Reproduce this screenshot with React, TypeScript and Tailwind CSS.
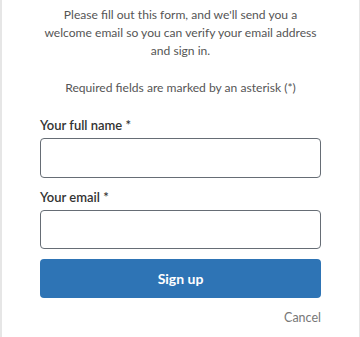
export default function App() {
  return (
    <div
      className="h-[337px] w-[360px] overflow-hidden border-l-2 border-r border-l-[#e6e6e6] border-r-[#e6e6e6] bg-white text-[12px] leading-[18px] text-[#555]"
      style={{ fontFamily: '"Segoe UI", Lato, "Open Sans", sans-serif' }}
    >
      <div className="px-[38px] pt-[6px]">
        <p className="text-center text-[12.1px]">
          Please fill out this form, and we'll send you a welcome email so you can verify your email address and sign in.
        </p>
        <p className="mt-[19px] text-center text-[12.1px]">Required fields are marked by an asterisk (*)</p>

        <form className="mt-[19px] flex flex-col">
          <label className="text-[13px] font-semibold text-[#333]">Your full name *</label>
          <input type="text" className="mt-[4px] h-[40px] w-full rounded-[4px] border border-[#666d75] px-2" />

          <label className="mt-[10px] text-[13px] font-semibold text-[#333]">Your email *</label>
          <input type="email" className="mt-[4px] h-[39px] w-full rounded-[4px] border border-[#666d75] px-2" />

          <button
            type="button"
            className="mt-[10px] h-[39px] w-full rounded-[4px] bg-[#2e74b5] text-[14px] font-bold text-white"
          >
            Sign up
          </button>

          <div className="mt-[11px] text-right text-[12.5px] text-[#777]">Cancel</div>
        </form>
      </div>
    </div>
  );
}
